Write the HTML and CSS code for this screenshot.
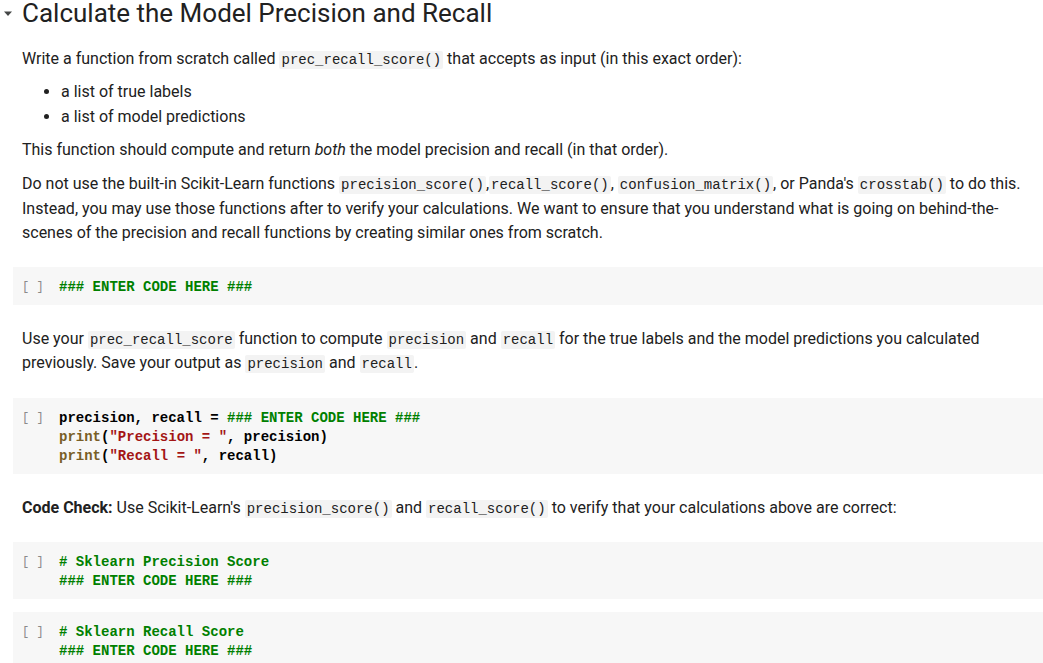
FILE: index.html
```html
<!DOCTYPE html>
<html>
<head>
<meta charset="utf-8">
<link rel="stylesheet" href="styles.css">
</head>
<body>
<div class="notebook">
  <div class="heading">
    <svg class="caret" width="10" height="6" viewBox="0 0 10 6"><path d="M1 0.5 L9 0.5 L5 5 Z" fill="#444746"/></svg>
    <h2 class="title">Calculate the Model Precision and Recall</h2>
  </div>

  <div class="md md-first">
    <p>Write a function from scratch called <code>prec_recall_score()</code> that accepts as input (in this exact order):</p>
    <ul>
      <li>a list of true labels</li>
      <li>a list of model predictions</li>
    </ul>
    <p>This function should compute and return <em>both</em> the model precision and recall (in that order).</p>
    <p>Do not use the built-in Scikit-Learn functions <code>precision_score()</code>,<code>recall_score()</code>, <code>confusion_matrix()</code>, or Panda's <code>crosstab()</code> to do this. Instead, you may use those functions after to verify your calculations. We want to ensure that you understand what is going on behind-the-scenes of the precision and recall functions by creating similar ones from scratch.</p>
  </div>

  <div class="cell">
    <span class="run">[ ]</span>
    <pre class="code"><span class="c">### ENTER CODE HERE ###</span></pre>
  </div>

  <div class="md">
    <p>Use your <code>prec_recall_score</code> function to compute <code>precision</code> and <code>recall</code> for the true labels and the model predictions you calculated previously. Save your output as <code>precision</code> and <code>recall</code>.</p>
  </div>

  <div class="cell">
    <span class="run">[ ]</span>
    <pre class="code">precision, recall = <span class="c">### ENTER CODE HERE ###</span>
<span class="f">print</span>(<span class="s">"Precision = "</span>, precision)
<span class="f">print</span>(<span class="s">"Recall = "</span>, recall)</pre>
  </div>

  <div class="md">
    <p><strong>Code Check:</strong> Use Scikit-Learn's <code>precision_score()</code> and <code>recall_score()</code> to verify that your calculations above are correct:</p>
  </div>

  <div class="cell">
    <span class="run">[ ]</span>
    <pre class="code"><span class="c"># Sklearn Precision Score
### ENTER CODE HERE ###</span></pre>
  </div>

  <div class="cell cell-last">
    <span class="run">[ ]</span>
    <pre class="code"><span class="c"># Sklearn Recall Score
### ENTER CODE HERE ###</span></pre>
  </div>
</div>
</body>
</html>
```

FILE: styles.css
```css
html, body {
  margin: 0;
  padding: 0;
  background: #ffffff;
}

body {
  font-family: Roboto, "Noto Sans", Arial, sans-serif;
  color: #212121;
  overflow: hidden;
}

.notebook {
  display: flex;
  flex-direction: column;
}

.heading {
  display: flex;
  align-items: center;
  height: 26px;
}

.caret {
  margin-left: 3px;
  margin-right: 9px;
  margin-top: 1px;
}

.title {
  margin: 0;
  font-size: 26px;
  font-weight: 400;
  line-height: 26px;
  color: #212121;
}

.md {
  padding: 0 20px 0 22px;
  font-size: 16px;
  line-height: 24.5px;
  margin: 22px 0 22px;
}

.md-first {
  margin: 21px 0 21px;
}

.md p {
  margin: 0 0 9.5px;
}

.md p:last-child {
  margin-bottom: 0;
}

.md ul {
  margin: -2px 0 9px;
  padding-left: 39px;
}

.md li {
  line-height: 25px;
}

.md code {
  font-family: "Liberation Mono", "DejaVu Sans Mono", monospace;
  font-size: 14px;
  line-height: 1;
  background: #f3f3f3;
  padding: 1px 2px;
  border-radius: 2px;
}

.cell {
  margin-left: 13px;
  background: #f7f7f7;
  display: flex;
  align-items: flex-start;
  padding: 11px 0 8px;
}

.cell + .cell {
  margin-top: 13px;
}

.run {
  font-family: "Liberation Mono", monospace;
  font-size: 12px;
  line-height: 19px;
  color: #8a8a8a;
  margin-left: 9px;
  width: 37px;
  white-space: pre;
}

.code {
  margin: 0;
  font-family: "Liberation Mono", "DejaVu Sans Mono", monospace;
  font-size: 14px;
  line-height: 19px;
  color: #000000;
  font-weight: 600;
}

.c { color: #008000; }
.s { color: #a31515; }
.f { color: #795e26; }
```
